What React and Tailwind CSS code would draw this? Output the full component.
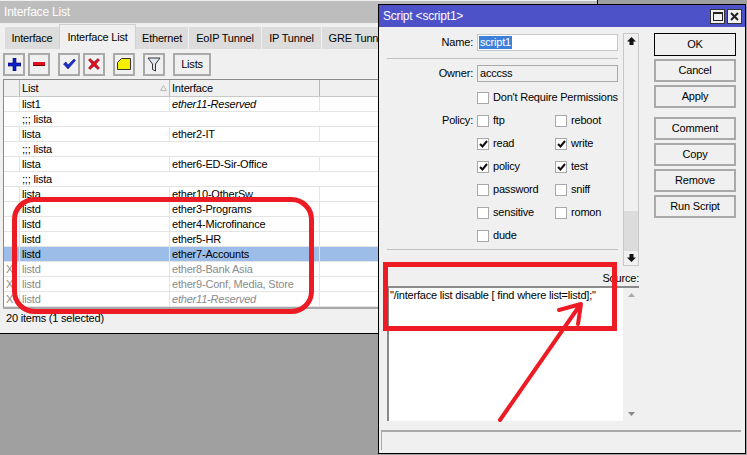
const font = "font-['Liberation_Sans',sans-serif]";

const rows = [
  { list: "list1", iface: "ether11-Reserved", italic: true },
  { comment: ";;; lista" },
  { list: "lista", iface: "ether2-IT" },
  { comment: ";;; lista" },
  { list: "lista", iface: "ether6-ED-Sir-Office" },
  { comment: ";;; lista" },
  { list: "lista", iface: "ether10-OtherSw" },
  { list: "listd", iface: "ether3-Programs" },
  { list: "listd", iface: "ether4-Microfinance" },
  { list: "listd", iface: "ether5-HR" },
  { list: "listd", iface: "ether7-Accounts", selected: true },
  { list: "listd", iface: "ether8-Bank Asia", off: true },
  { list: "listd", iface: "ether9-Conf, Media, Store", off: true },
  { list: "listd", iface: "ether11-Reserved", off: true, italic: true },
];

const tabs = [
  { name: "Ethernet", width: "w-[53px]" },
  { name: "EoIP Tunnel", width: "w-[73px]" },
  { name: "IP Tunnel", width: "w-[60px]" },
  { name: "GRE Tunnel", width: "w-[72px]" },
];

function ToolButton({ className = "", children }) {
  return (
    <div className={`w-[22px] h-[23px] shrink-0 border-2 border-[#a9a9a9] bg-[#f0f0f0] flex items-center justify-center ${className}`}>
      {children}
    </div>
  );
}

function Row({ row }) {
  if (row.comment) {
    return (
      <div className="h-[15px] flex border-b border-[#e4e4e4] bg-white">
        <div className="w-[16px] shrink-0" />
        <div className="pl-[2px] leading-[14px]">{row.comment}</div>
      </div>
    );
  }
  const color = row.off ? "text-[#8a8a8a]" : "text-black";
  return (
    <div className={`h-[15px] flex border-b border-[#e4e4e4] ${row.selected ? "bg-[#9cbde8]" : "bg-white"} ${color}`}>
      <div className="w-[16px] h-full shrink-0 border-r border-[#e4e4e4] pl-[2px] leading-[14px] overflow-hidden">{row.off ? "X" : ""}</div>
      <div className="w-[150px] h-full shrink-0 border-r border-[#e4e4e4] pl-[2px] leading-[14px]">{row.list}</div>
      <div className={`w-[150px] h-full shrink-0 border-r border-[#e4e4e4] pl-[2px] leading-[14px] whitespace-nowrap ${row.italic ? "italic" : ""}`}>{row.iface}</div>
    </div>
  );
}

function InterfaceListWindow() {
  return (
    <div className="absolute left-0 top-0 w-[598px] h-[334px] bg-[#f0f0f0] border-b border-r border-black overflow-hidden">
      <div className="h-[22px] mt-px bg-[#bdbdbd] text-white text-[12px] pl-[4px] flex items-center">Interface List</div>
      <div className="h-[26px] flex items-end pl-[5px] bg-[#f0f0f0]">
        <div className="h-[22px] w-[54px] shrink-0 bg-[#dcdcdc] flex items-center justify-center">Interface</div>
        <div className="h-[25px] w-[77px] shrink-0 bg-[#f0f0f0] border-x border-t border-[#d0d0d0] flex items-center justify-center">Interface List</div>
        {tabs.map((t) => (
          <div key={t.name} className={`h-[22px] shrink-0 bg-[#dcdcdc] border-r border-[#f0f0f0] flex items-center justify-center ${t.width}`}>{t.name}</div>
        ))}
      </div>
      <div className="flex items-center h-[30px] pl-[3px] gap-[3px]">
        <ToolButton>
          <svg width="13" height="13" viewBox="0 0 13 13"><path d="M5 0h3v5h5v3H8v5H5V8H0V5h5z" fill="#0a1fd0" stroke="#00005a" strokeWidth="0.6" /></svg>
        </ToolButton>
        <ToolButton>
          <div className="w-[12px] h-[4px] bg-[#e01020] border-b border-[#770000]" />
        </ToolButton>
        <ToolButton className="ml-[5px]">
          <svg width="13" height="12" viewBox="0 0 13 12"><path d="M0.5 6 L3 4 L5 7 L11 1 L12.5 2.5 L5 11 Z" fill="#1a2fd0" stroke="#00005a" strokeWidth="0.5" /></svg>
        </ToolButton>
        <ToolButton>
          <svg width="12" height="12" viewBox="0 0 12 12"><path d="M2 0.5L6 4 10 0.5 11.5 2 8 6l3.5 4-1.5 1.5L6 8l-4 3.5L0.5 10 4 6 0.5 2z" fill="#e01020" stroke="#660000" strokeWidth="0.5" /></svg>
        </ToolButton>
        <ToolButton className="ml-[5px]">
          <svg width="14" height="12" viewBox="0 0 14 12"><path d="M0.5 4.5 L4.5 0.5 H13.5 V11.5 H0.5 Z" fill="#f5ee00" stroke="#333" /></svg>
        </ToolButton>
        <ToolButton className="ml-[5px]">
          <svg width="14" height="15" viewBox="0 0 14 15"><path d="M1 1 H13 L8.5 7 V14 L5.5 12.5 V7 Z" fill="#dfe6ee" stroke="#333" /></svg>
        </ToolButton>
        <ToolButton className="w-[38px] ml-[5px]">Lists</ToolButton>
      </div>
      <div className="ml-[3px] border-l border-t border-[#8a8a8a] bg-white">
        <div className="h-[17px] flex bg-[#f0f0f0] border-b border-[#c8c8c8]">
          <div className="w-[16px] border-r border-[#b8b8b8] shrink-0" />
          <div className="w-[150px] border-r border-[#b8b8b8] pl-[2px] shrink-0 flex items-center justify-between pr-[2px]">
            List
            <svg width="7" height="6" viewBox="0 0 7 6"><path d="M3.5 0.5 L6.5 5.5 H0.5 Z" fill="none" stroke="#bbb" /></svg>
          </div>
          <div className="w-[150px] border-r border-[#b8b8b8] pl-[2px] shrink-0 flex items-center">Interface</div>
        </div>
        {rows.map((row, i) => (
          <Row key={i} row={row} />
        ))}
      </div>
      <div className="ml-[3px] h-[21px] flex items-center pl-[3px] border-t-2 border-[#a9a9a9]">20 items (1 selected)</div>
    </div>
  );
}

function Check({ label, checked, className = "" }) {
  return (
    <div className={`flex items-center h-[23px] ${className}`}>
      <div className="w-[10px] h-[10px] box-content border border-[#a9a9a9] bg-white flex items-center justify-center shrink-0">
        {checked && (
          <svg width="9" height="8" viewBox="0 0 9 8"><path d="M1 4 L3.5 6.5 L8 1" fill="none" stroke="#111" strokeWidth="2" /></svg>
        )}
      </div>
      <span className="ml-[4px] whitespace-nowrap">{label}</span>
    </div>
  );
}

function DlgButton({ children, className = "border-2 border-[#a9a9a9]" }) {
  return (
    <div className={`w-[82px] h-[23px] flex items-center justify-center bg-[#f0f0f0] ${className}`}>{children}</div>
  );
}

function ScriptWindow() {
  return (
    <div className="absolute left-[378px] top-[4px] w-[368px] h-[450px] bg-[#f0f0f0] border border-black flex flex-col">
      <div className="h-[22px] shrink-0 bg-[#4e52c8] text-white text-[12px] pl-[4px] flex items-center justify-between pr-[3px]">
        Script &lt;script1&gt;
        <div className="flex gap-[2px]">
          <div className="w-[15px] h-[15px] bg-[#f0f0f0] border border-[#333] flex items-center justify-center">
            <div className="w-[10px] h-[9px] border border-[#222] border-t-2" />
          </div>
          <div className="w-[15px] h-[15px] bg-[#f0f0f0] border border-[#333] flex items-center justify-center">
            <svg width="9" height="9" viewBox="0 0 9 9"><path d="M1 1 L8 8 M8 1 L1 8" stroke="#222" strokeWidth="2" /></svg>
          </div>
        </div>
      </div>

      <div className="h-[243px] shrink-0 flex">
        <div className="w-[244px] shrink-0 pl-[8px] pt-[7px] flex flex-col">
          <div className="flex items-center h-[17px]">
            <div className="w-[90px] shrink-0 text-right pr-[4px]">Name:</div>
            <div className="w-[141px] h-[17px] bg-white border border-[#c8c8c8] pl-[1px] flex items-center">
              <span className="bg-[#3d7fdb] text-white leading-[13px] px-px">script1</span>
            </div>
          </div>
          <div className="w-[231px] border-t border-[#c0c0c0] mt-[7px]" />
          <div className="flex items-center h-[17px] mt-[6px]">
            <div className="w-[90px] shrink-0 text-right pr-[4px]">Owner:</div>
            <div className="w-[141px] h-[17px] border border-[#a9a9a9] pl-[2px] flex items-center">acccss</div>
          </div>
          <Check label="Don't Require Permissions" className="ml-[90px] mt-[4px]" />
          <div className="flex">
            <div className="w-[90px] shrink-0 text-right pr-[4px] leading-[23px]">Policy:</div>
            <div className="grid grid-cols-[78px_78px] shrink-0">
              <Check label="ftp" />
              <Check label="reboot" />
              <Check label="read" checked />
              <Check label="write" checked />
              <Check label="policy" checked />
              <Check label="test" checked />
              <Check label="password" />
              <Check label="sniff" />
              <Check label="sensitive" />
              <Check label="romon" />
              <Check label="dude" />
            </div>
          </div>
          <div className="w-[231px] border-t border-[#c0c0c0] mt-[2px]" />
        </div>

        <div className="w-[16px] h-[233px] shrink-0 mt-[6px] border border-[#c8c8c8] flex flex-col bg-[#f0f0f0]">
          <div className="h-[14px] flex items-center justify-center">
            <svg width="9" height="8" viewBox="0 0 9 8"><path d="M4.5 0 L9 4.5 H6.5 V8 H2.5 V4.5 H0 Z" fill="#111" /></svg>
          </div>
          <div className="flex-1" />
          <div className="h-[40px] bg-[#dcdcdc]" />
          <div className="h-[14px] flex items-center justify-center">
            <svg width="9" height="8" viewBox="0 0 9 8"><path d="M4.5 8 L9 3.5 H6.5 V0 H2.5 V3.5 H0 Z" fill="#111" /></svg>
          </div>
        </div>

        <div className="ml-[15px] pt-[6px] flex flex-col gap-[3px]">
          <DlgButton className="border border-black">OK</DlgButton>
          <DlgButton>Cancel</DlgButton>
          <DlgButton>Apply</DlgButton>
          <DlgButton className="border-2 border-[#a9a9a9] mt-[6px]">Comment</DlgButton>
          <DlgButton>Copy</DlgButton>
          <DlgButton>Remove</DlgButton>
          <DlgButton>Run Script</DlgButton>
        </div>
      </div>

      <div className="w-[252px] ml-[8px] h-[16px] shrink-0 flex items-center justify-end">Source:</div>
      <div className="ml-[8px] w-[252px] h-[135px] shrink-0 flex bg-white border-l-2 border-t-2 border-[#8a8a8a]">
        <div className="flex-1 pl-[1px] leading-[14px] whitespace-nowrap">"/interface list disable [ find where list=listd];"</div>
        <div className="w-[16px] bg-[#f0f0f0] flex flex-col items-center justify-between py-[5px]">
          <svg width="7" height="4" viewBox="0 0 7 4"><path d="M3.5 0 L7 4 H0 Z" fill="#aaa" /></svg>
          <svg width="7" height="4" viewBox="0 0 7 4"><path d="M3.5 4 L7 0 H0 Z" fill="#888" /></svg>
        </div>
      </div>
      <div className="ml-[2px] mt-[9px] w-[360px] h-[20px] shrink-0 border-t-2 border-l border-[#a9a9a9]" />
    </div>
  );
}

export default function App() {
  return (
    <div className={`relative w-[747px] h-[455px] bg-[#a0a0a0] overflow-hidden text-[11px] tracking-[-0.2px] text-black ${font}`}>
      <InterfaceListWindow />
      <ScriptWindow />
      <svg className="absolute left-0 top-0" width="747" height="455" viewBox="0 0 747 455">
        <rect x="14.5" y="199.5" width="297" height="112" rx="20" fill="none" stroke="#ed1c24" strokeWidth="5" />
        <rect x="385.5" y="264.5" width="229" height="64" fill="none" stroke="#ed1c24" strokeWidth="5" />
        <path d="M500 420 L580 305 M559 310 L581 304 L578 324" fill="none" stroke="#ed1c24" strokeWidth="4" strokeLinecap="round" strokeLinejoin="round" />
      </svg>
    </div>
  );
}
